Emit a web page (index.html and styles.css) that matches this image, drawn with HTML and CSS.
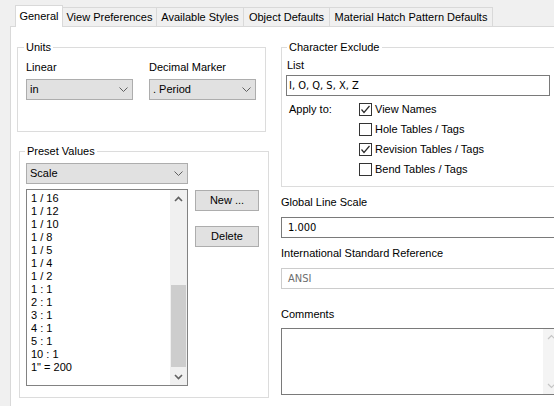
FILE: index.html
```html
<!DOCTYPE html>
<html>
<head>
<meta charset="utf-8">
<link rel="stylesheet" href="styles.css">
</head>
<body>
<div class="tabs">
  <div class="tab active t-general">General</div>
  <div class="tab t-view">View Preferences</div>
  <div class="tab t-avail">Available Styles</div>
  <div class="tab t-obj">Object Defaults</div>
  <div class="tab t-mat">Material Hatch Pattern Defaults</div>
</div>
<div class="panel">
  <div class="col-left">
    <fieldset class="group units">
      <legend>Units</legend>
      <div class="units-row">
        <div class="field">
          <div class="lbl">Linear</div>
          <div class="combo"><span>in</span><svg class="chev" width="9" height="5" viewBox="0 0 9 5"><polyline points="0.5,0.5 4.5,4.5 8.5,0.5" fill="none" stroke="#5f5f5f" stroke-width="1"/></svg></div>
        </div>
        <div class="field">
          <div class="lbl">Decimal Marker</div>
          <div class="combo"><span>. Period</span><svg class="chev" width="9" height="5" viewBox="0 0 9 5"><polyline points="0.5,0.5 4.5,4.5 8.5,0.5" fill="none" stroke="#5f5f5f" stroke-width="1"/></svg></div>
        </div>
      </div>
    </fieldset>
    <fieldset class="group preset">
      <legend>Preset Values</legend>
      <div class="combo wide"><span>Scale</span><svg class="chev" width="9" height="5" viewBox="0 0 9 5"><polyline points="0.5,0.5 4.5,4.5 8.5,0.5" fill="none" stroke="#5f5f5f" stroke-width="1"/></svg></div>
      <div class="preset-row">
        <div class="listbox">
          <ul class="items">
            <li>1 / 16</li>
            <li>1 / 12</li>
            <li>1 / 10</li>
            <li>1 / 8</li>
            <li>1 / 5</li>
            <li>1 / 4</li>
            <li>1 / 2</li>
            <li>1 : 1</li>
            <li>2 : 1</li>
            <li>3 : 1</li>
            <li>4 : 1</li>
            <li>5 : 1</li>
            <li>10 : 1</li>
            <li>1" = 200</li>
          </ul>
          <div class="vscroll">
            <div class="arrow"><svg width="9" height="6" viewBox="0 0 9 6"><polyline points="1,5 4.5,1.5 8,5" fill="none" stroke="#606060" stroke-width="1.6"/></svg></div>
            <div class="track"><div class="thumb"></div></div>
            <div class="arrow"><svg width="9" height="6" viewBox="0 0 9 6"><polyline points="1,1 4.5,4.5 8,1" fill="none" stroke="#606060" stroke-width="1.6"/></svg></div>
          </div>
        </div>
        <div class="buttons">
          <div class="btn">New ...</div>
          <div class="btn">Delete</div>
        </div>
      </div>
    </fieldset>
  </div>
  <div class="col-right">
    <fieldset class="group charex">
      <legend>Character Exclude</legend>
      <div class="lbl list-lbl">List</div>
      <div class="textbox">I, O, Q, S, X, Z</div>
      <div class="apply">
        <div class="apply-lbl">Apply to:</div>
        <div class="checks">
          <div class="check-row"><span class="cbox"><svg width="11" height="11" viewBox="0 0 11 11"><polyline points="1.5,5.5 4,8.5 9.5,2" fill="none" stroke="#2b2b2b" stroke-width="1.2"/></svg></span><span>View Names</span></div>
          <div class="check-row"><span class="cbox"></span><span>Hole Tables / Tags</span></div>
          <div class="check-row"><span class="cbox"><svg width="11" height="11" viewBox="0 0 11 11"><polyline points="1.5,5.5 4,8.5 9.5,2" fill="none" stroke="#2b2b2b" stroke-width="1.2"/></svg></span><span>Revision Tables / Tags</span></div>
          <div class="check-row"><span class="cbox"></span><span>Bend Tables / Tags</span></div>
        </div>
      </div>
    </fieldset>
    <div class="lbl field-lbl">Global Line Scale</div>
    <div class="textbox wide-box">1.000</div>
    <div class="lbl field-lbl">International Standard Reference</div>
    <div class="textbox wide-box disabled">ANSI</div>
    <div class="lbl field-lbl comments-lbl">Comments</div>
    <div class="textarea">
      <div class="ta-text"></div>
      <div class="ta-scroll">
        <svg width="9" height="6" viewBox="0 0 9 6"><polyline points="1,5 4.5,1.5 8,5" fill="none" stroke="#c5c5c5" stroke-width="1.2"/></svg>
        <svg width="9" height="6" viewBox="0 0 9 6"><polyline points="1,1 4.5,4.5 8,1" fill="none" stroke="#c5c5c5" stroke-width="1.2"/></svg>
      </div>
    </div>
  </div>
</div>
</body>
</html>
```

FILE: styles.css
```css
* { box-sizing: border-box; }

html {
  overflow: hidden;
}
body {
  margin: 0;
  width: 554px;
  height: 406px;
  overflow: hidden;
  background: #f0f0f0;
  color: #000;
  font-family: "Liberation Sans", Arial, sans-serif;
  font-size: 11px;
  line-height: 15px;
}

/* Tabs */
.tabs {
  display: flex;
  align-items: flex-end;
  height: 26px;
  padding-left: 16px;
}
.tab {
  height: 19px;
  margin-left: -1px;
  padding-top: 2px;
  border: 1px solid #d9d9d9;
  border-bottom: none;
  background: #f0f0f0;
  text-align: center;
  white-space: nowrap;
}
.tab.active {
  position: relative;
  z-index: 2;
  height: 22px;
  margin-bottom: -1px;
  padding-top: 3px;
  background: #fff;
}
.t-general { width: 48px; }
.t-view { width: 95px; }
.t-avail { width: 88px; }
.t-obj { width: 87px; }
.t-mat { width: 164px; }

/* Panel */
.panel {
  display: flex;
  width: 544px;
  height: 380px;
  margin-left: 10px;
  overflow: hidden;
  border-left: 1px solid #d9d9d9;
  border-top: 1px solid #d9d9d9;
  background: #fff;
}
.col-left {
  flex: none;
  width: 258px;
  padding-left: 6px;
}
.col-right {
  flex: none;
  width: 340px;
  margin-left: 12px;
}

.group {
  margin: 0;
  min-width: 0;
  border: 1px solid #dcdcdc;
}
.group legend {
  padding: 0 2px;
  line-height: 14px;
}

/* Units */
.units {
  width: 249px;
  margin-top: 13px;
  padding: 6px 8px 31px;
}
.units legend { margin-left: -2px; }
.units-row {
  display: flex;
  gap: 16px;
}
.field { width: 107px; }
.field .lbl { margin-bottom: 4px; }

.combo {
  display: flex;
  align-items: center;
  justify-content: space-between;
  height: 21px;
  padding: 0 4px 0 3px;
  border: 1px solid #adadad;
  background: #e1e1e1;
  white-space: nowrap;
}
.chev { flex: none; }

/* Preset */
.preset {
  width: 250px;
  margin: 12px 0 0 2px;
  padding: 5px 6px 11px;
}
.preset legend { margin-left: -1px; }
.combo.wide { width: 162px; }
.preset-row {
  display: flex;
  align-items: flex-start;
  gap: 7px;
  margin-top: 5px;
}
.listbox {
  display: flex;
  width: 162px;
  height: 197px;
  border: 1px solid #828282;
  background: #fff;
}
.items {
  flex: 1;
  margin: 0;
  padding: 2px 0 0 4px;
  list-style: none;
  line-height: 13px;
}
.vscroll {
  display: flex;
  flex-direction: column;
  width: 17px;
  background: #f0f0f0;
}
.arrow {
  display: flex;
  align-items: center;
  justify-content: center;
  height: 17px;
}
.track {
  flex: 1;
  padding: 78px 1px 0;
}
.thumb {
  height: 82px;
  background: #cdcdcd;
}
.buttons {
  display: flex;
  flex-direction: column;
  gap: 15px;
  margin-top: 1px;
}
.btn {
  width: 64px;
  height: 21px;
  border: 1px solid #adadad;
  background: #e1e1e1;
  text-align: center;
  line-height: 19px;
}

/* Character exclude */
.charex {
  width: 320px;
  margin-top: 13px;
  padding: 4px 50px 7px 5px;
}
.charex legend { margin-left: 0; }
.list-lbl { margin-bottom: 2px; }

.textbox {
  height: 21px;
  padding-left: 2px;
  border: 1px solid #7a7a7a;
  background: #fff;
  font-family: "DejaVu Sans Condensed", "Liberation Sans", sans-serif;
  font-size: 11px;
  line-height: 19px;
  white-space: nowrap;
}
.charex .textbox { margin-left: -1px; }

.apply {
  display: flex;
  margin-top: 3px;
}
.apply-lbl {
  width: 72px;
  padding-left: 2px;
  line-height: 20px;
}
.check-row {
  display: flex;
  align-items: center;
  gap: 3px;
  height: 20px;
}
.cbox {
  display: flex;
  align-items: center;
  justify-content: center;
  width: 13px;
  height: 13px;
  border: 1px solid #333;
  background: #fff;
}

.field-lbl {
  margin-top: 8px;
  margin-bottom: 7px;
}
.wide-box {
  width: 320px;
  padding-left: 6px;
}
.disabled {
  border-color: #cccccc;
  color: #6d6d6d;
}
.comments-lbl {
  margin-top: 18px;
  margin-bottom: 6px;
}
.textarea {
  display: flex;
  width: 280px;
  height: 67px;
  border: 1px solid #7a7a7a;
  background: #fff;
}
.ta-text { flex: 1; }
.ta-scroll {
  display: flex;
  flex-direction: column;
  align-items: center;
  justify-content: space-between;
  width: 17px;
  padding: 5px 0;
  background: #f4f4f4;
}
```
